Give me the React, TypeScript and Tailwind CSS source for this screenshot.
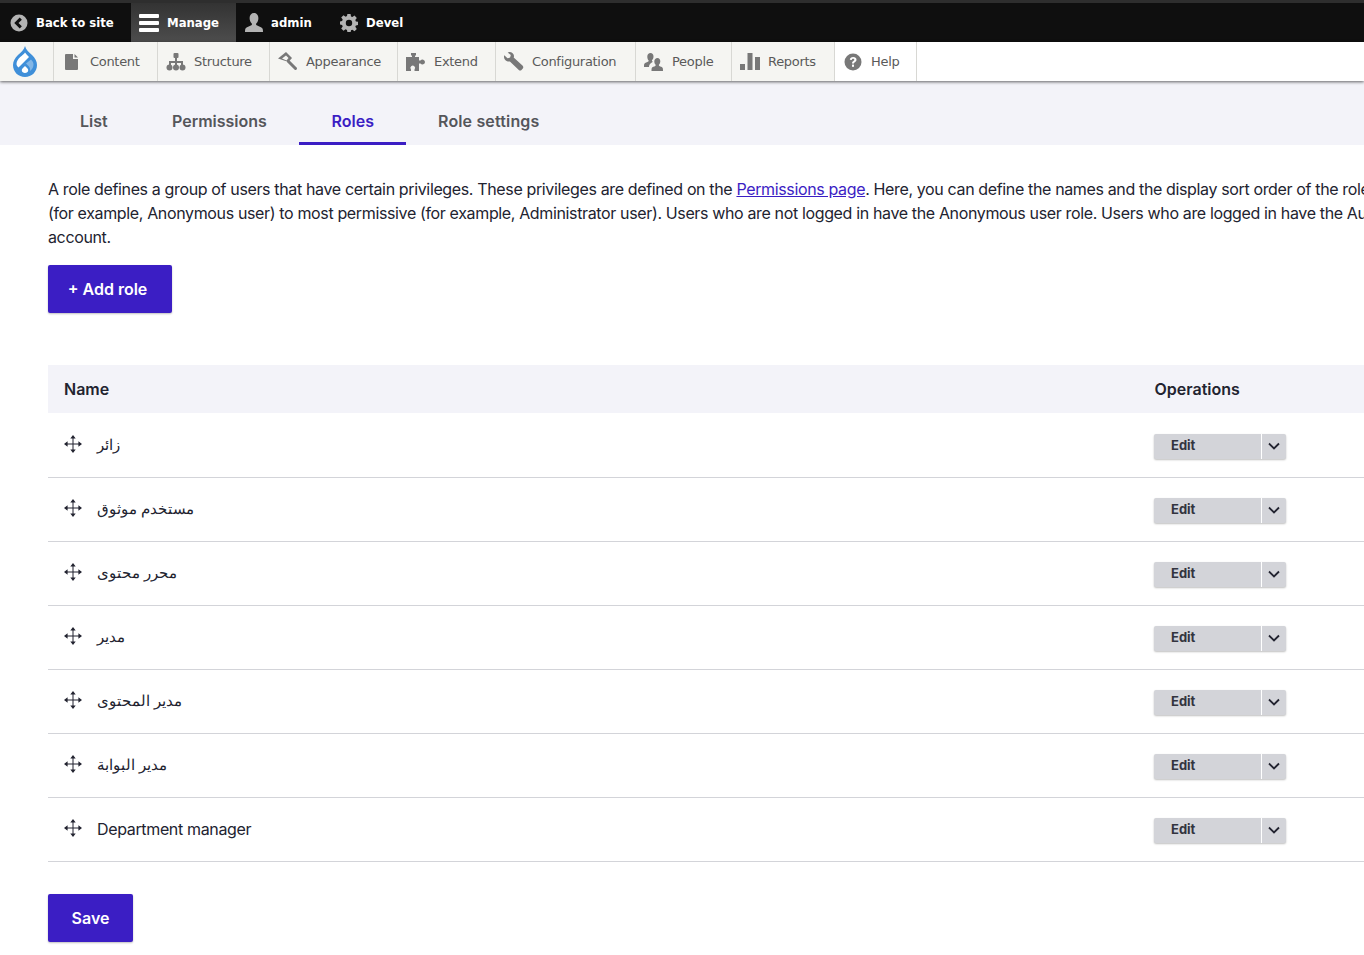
import type { ReactNode } from 'react';

function BackIcon() {
  return (
    <svg width="18" height="18" viewBox="0 0 18 18">
      <circle cx="9" cy="9" r="8.5" fill="#b3b3b3" />
      <path d="M10.8 4.6 6.4 9l4.4 4.4" fill="none" stroke="#0f0f0f" strokeWidth="3" />
    </svg>
  );
}

function ManageIcon() {
  return (
    <svg width="20" height="20" viewBox="0 0 20 20" fill="#fff">
      <rect x="0" y="1" width="20" height="4" rx="1" />
      <rect x="0" y="8" width="20" height="4" rx="1" />
      <rect x="0" y="15" width="20" height="4" rx="1" />
    </svg>
  );
}

function UserIcon() {
  return (
    <svg width="18" height="20" viewBox="0 0 18 20" fill="#b3b3b3">
      <path d="M9 0c2.600 0 4.400 2 4.400 5 0 2.400-1 4.300-2 5.300-.5.600-.4 1.600.3 2 1.800.9 4.800 1.700 5.800 3.200.4.700.5 2 .5 3.500H0c0-1.500.1-2.800.5-3.500 1-1.500 4-2.300 5.800-3.200.7-.4.8-1.400.3-2-1-1-2-2.900-2-5.300C4.600 2 6.400 0 9 0z" />
    </svg>
  );
}

function GearIcon() {
  return (
    <svg width="18" height="18" viewBox="0 0 18 18" fill="#b3b3b3">
      <path fillRule="evenodd" d="M7.400 0h3.200l.4 2.500 1.400.6 2.100-1.500 2.300 2.300-1.500 2.100.6 1.400 2.100.4v3.200l-2.100.4-.6 1.400 1.500 2.100-2.300 2.300-2.100-1.500-1.400.6-.4 2.100H7.400L7 15.900l-1.400-.6-2.100 1.500-2.300-2.300 1.500-2.100-.6-1.400-2.100-.4V7.400l2.100-.4.600-1.400-1.500-2.100 2.300-2.300 2.100 1.500L7 2.100zM9 5.800a3.200 3.200 0 1 0 0 6.400 3.200 3.200 0 0 0 0-6.400z" />
    </svg>
  );
}

function DropLogo() {
  return (
    <svg width="24" height="31" viewBox="0 0 24 31">
      <path d="M12 0c1 4 4 6 7 9 3 3 5 6 5 10 0 7-5.400 12-12 12S0 26 0 19c0-4 2-7 5-10 3-3 6-5 7-9z" fill="#3f8fd9" />
      <path d="M12 6.500c1 1.500 2.500 3 4 4.500L5.500 21.500C4.500 20.500 3.500 19.500 3.500 18c0-3 1.700-5 3.700-7 1.800-1.500 3.800-3 4.800-4.500z" fill="#fff" />
      <path d="M18 13.500c1.500 1.500 2.500 3 2.500 5 0 2.800-1.500 5-3.500 6.500.4-2-.2-3.800-1.500-5l-2.500-2.500z" fill="#fff" opacity="0.35" />
      <path d="M12 20l2.300 2.300c1.300 1.300 1.200 3-.1 4-1.200.9-3.200.9-4.400 0-1.300-1-1.400-2.700-.1-4z" fill="#fff" />
    </svg>
  );
}

function ContentIcon() {
  return (
    <svg width="14" height="16" viewBox="0 0 14 16" fill="#787878">
      <path d="M1 0h7v5h5v10a1 1 0 0 1-1 1H1a1 1 0 0 1-1-1V1a1 1 0 0 1 1-1z" />
      <path d="M9.500 0 13 3.600H9.500z" />
    </svg>
  );
}

function StructureIcon() {
  return (
    <svg width="20" height="18" viewBox="0 0 20 18" fill="#787878">
      <rect x="7.500" y="0" width="5" height="5" rx="1" />
      <rect x="9" y="4" width="2" height="9" />
      <path d="M3 8h14v5h-2v-3H5v3H3z" />
      <circle cx="3.500" cy="14.500" r="3" />
      <circle cx="10" cy="14.500" r="3" />
      <circle cx="16.500" cy="14.500" r="3" />
    </svg>
  );
}

function AppearanceIcon() {
  return (
    <svg width="20" height="19" viewBox="0 0 20 19">
      <path d="M8 0 14 6l-3.500 4L0 6.500z" fill="#787878" />
      <path d="M4 6.500 8 3.500l2.500 2.500L8.500 8.500z" fill="#f5f5f2" />
      <path d="m10.500 9.500 7 7" stroke="#787878" strokeWidth="3" strokeLinecap="round" />
    </svg>
  );
}

function ExtendIcon() {
  return (
    <svg width="20" height="18" viewBox="0 0 20 18" fill="#787878">
      <path d="M5 0h5v2.500H9V4h4v3.500h1.500a2.500 2.500 0 0 1 4.500 1.500 2.500 2.500 0 0 1-4.500 1.500H13V18H8.500v-1.500a2.300 2.300 0 1 0-3.500 0V18H0V4h6V2.500H5z" />
    </svg>
  );
}

function ConfigIcon() {
  return (
    <svg width="20" height="19" viewBox="0 0 20 19" fill="#787878">
      <path d="M5.500 0c2.400 0 4.500 1.700 4.500 4 0 .7-.1 1.100-.3 1.600l9 8.200c.7.700.8 1.800.1 2.600l-1.300 1.500c-.7.800-1.900.9-2.700.1L5.900 9.500C3 10 0 8.200 0 4.800c0-.6.100-1 .3-1.500l3.200 3 2.600-.7.700-2.500L3.700.5C4.300.2 4.900 0 5.500 0z" />
    </svg>
  );
}

function PeopleIcon() {
  return (
    <svg width="20" height="18" viewBox="0 0 20 18" fill="#787878">
      <path d="M6.500 0C8.300 0 9.500 1.400 9.500 3.400c0 1.600-.7 3-1.400 3.700-.3.400-.2 1 .2 1.300l.7.400c-.6.500-1.700 1.100-2.500 1.700-1 .8-1.500 2-1.500 3.500H0c0-1.500 0-2.700.4-3.200.7-1 2.800-1.600 3.900-2.200.4-.3.500-.9.200-1.300-.7-.8-1.200-2.200-1.200-3.900C3.300 1.400 4.700 0 6.500 0z" />
      <path d="M13.500 5c1.700 0 2.800 1.300 2.800 3.200 0 1.500-.6 2.700-1.200 3.400-.3.400-.3 1 .2 1.300 1.100.6 2.900 1 3.400 2 .2.500.3 1.600.3 3.100H7.500c0-1.500.1-2.600.3-3.100.5-1 2.400-1.400 3.500-2 .4-.3.500-.9.200-1.300-.7-.7-1.200-1.900-1.200-3.400C10.300 6.300 11.800 5 13.500 5z" />
    </svg>
  );
}

function ReportsIcon() {
  return (
    <svg width="20" height="18" viewBox="0 0 20 18" fill="#787878">
      <rect x="0" y="11" width="5" height="6" />
      <rect x="7.500" y="0" width="5" height="17" />
      <rect x="15" y="4" width="5" height="13" />
    </svg>
  );
}

function HelpIcon() {
  return (
    <svg width="18" height="18" viewBox="0 0 18 18">
      <circle cx="9" cy="9" r="8.500" fill="#787878" />
      <path d="M5.800 6.800C6 5 7.300 4 9.200 4c1.900 0 3.300 1.100 3.300 2.700 0 2.300-2.500 2.200-2.500 3.900H8c0-2.600 2.300-2.700 2.300-3.900 0-.6-.5-1-1.200-1-.8 0-1.200.5-1.300 1.300z" fill="#fff" />
      <rect x="8" y="11.600" width="2" height="2.200" fill="#fff" />
    </svg>
  );
}

function DragIcon() {
  return (
    <svg width="18" height="18" viewBox="0 0 18 18" fill="#222330" stroke="none">
      <path d="M8.500 2h1v14h-1zM2 8.500h14v1H2z" />
      <path d="M9 0l2.700 3.600H6.300zM9 18l2.700-3.600H6.300zM0 9l3.600-2.700v5.400zM18 9l-3.600-2.700v5.400z" />
    </svg>
  );
}

function TopItem({ icon, label, className }: { icon: ReactNode; label: string; className: string }) {
  return (
    <div className={`flex items-center h-full text-[13px] font-bold text-white ${className}`}>
      {icon}
      <span>{label}</span>
    </div>
  );
}

function TrayItem({ icon, label, width, active }: { icon: ReactNode; label: string; width: string; active?: boolean }) {
  return (
    <div className={`flex items-center h-full gap-2 pl-[8px] border-r border-[#d8d8d4] text-[13px] tracking-[-0.3px] text-[#5a5a5a] ${width} ${active ? 'bg-white' : 'bg-[#f5f5f2]'}`}>
      <span className="flex w-5 justify-center shrink-0">{icon}</span>
      <span>{label}</span>
    </div>
  );
}

const ROLES = ['زائر', 'مستخدم موثوق', 'محرر محتوى', 'مدير', 'مدير المحتوى', 'مدير البوابة', 'Department manager'];

function RoleRow({ name }: { name: string }) {
  const isArabic = /[\u0600-\u06FF]/.test(name);
  return (
    <div className="flex items-center h-16 border-b border-[#d3d4d9] pl-[15.500px]">
      <span className="w-[33.500px] shrink-0 -mt-[3px]">
        <DragIcon />
      </span>
      <span className={`w-[1057px] shrink-0 tracking-[-0.35px] text-[#222330] ${isArabic ? '-mt-[1px] text-[15px]' : '-mt-[2px] text-[16px]'}`}>{name}</span>
      <div className="flex h-[25px] w-[132px] mt-px rounded-[2px] bg-[#d3d4d9] shadow-[0_1px_2px_rgba(0,0,0,0.25)] text-[13px] font-bold text-[#33343f]">
        <span className="w-[108px] pl-[17px] leading-[23px] border-r border-white">Edit</span>
        <span className="flex-1 flex items-center justify-center">
          <svg width="12" height="8" viewBox="0 0 12 8" fill="none" stroke="#222330" strokeWidth="1.800">
            <path d="M1 1.500 6 6.500l5-5" />
          </svg>
        </span>
      </div>
    </div>
  );
}

export default function App() {
  return (
    <div className="h-[955px] w-[1364px] overflow-hidden bg-white font-['Inter',sans-serif] text-[#222330]">
      {/* Toolbar */}
      <div className="flex h-[42px] items-center bg-[#0f0f0f] border-t-[3px] border-[#2e2e2e] font-['DejaVu_Sans_Condensed','DejaVu_Sans',sans-serif]">
        <TopItem icon={<BackIcon />} label="Back to site" className="w-[131px] pl-[10px] gap-[8px]" />
        <TopItem icon={<ManageIcon />} label="Manage" className="w-[105px] pl-[8px] gap-[8px] bg-gradient-to-b from-[#333333] to-[#4d4d4d]" />
        <TopItem icon={<UserIcon />} label="admin" className="w-[95px] pl-[9px] gap-[8px]" />
        <TopItem icon={<GearIcon />} label="Devel" className="pl-[9px] gap-[8px]" />
      </div>
      {/* Tray */}
      <div className="relative z-10 flex h-[39px] bg-white shadow-[0_1px_3px_rgba(0,0,0,0.6)] font-['DejaVu_Sans',sans-serif]">
        <div className="flex items-center justify-center w-[54px] h-full bg-[#f5f5f2] border-r border-[#d8d8d4] pr-[3px]">
          <DropLogo />
        </div>
        <TrayItem icon={<ContentIcon />} label="Content" width="w-[104px]" />
        <TrayItem icon={<StructureIcon />} label="Structure" width="w-[112px]" />
        <TrayItem icon={<AppearanceIcon />} label="Appearance" width="w-[128px]" />
        <TrayItem icon={<ExtendIcon />} label="Extend" width="w-[98px]" />
        <TrayItem icon={<ConfigIcon />} label="Configuration" width="w-[140px]" />
        <TrayItem icon={<PeopleIcon />} label="People" width="w-[96px]" />
        <TrayItem icon={<ReportsIcon />} label="Reports" width="w-[103px]" />
        <TrayItem icon={<HelpIcon />} label="Help" width="w-[82px]" active />
      </div>
      {/* Tabs */}
      <div className="flex h-[64px] items-end bg-[#f3f3f9] pl-[48px] text-[16px] font-semibold text-[#55565b]">
        <div className="flex h-12 w-[92px] items-center pl-8">List</div>
        <div className="flex h-12 w-[159px] items-center pl-8">Permissions</div>
        <div className="flex h-12 w-[107px] items-center pl-[32.500px] text-[#3b1ec4] border-b-[3px] border-[#3b1ec4] pt-[3px]">Roles</div>
        <div className="flex h-12 items-center px-8 tracking-[0.15px]">Role settings</div>
      </div>
      {/* Body */}
      <div className="pl-12 pt-8">
        <p className="whitespace-nowrap text-[16px] leading-6 tracking-[-0.36px]">
          A role defines a group of users that have certain privileges. These privileges are defined on the{' '}
          <a className="text-[#3b1ec4] underline">Permissions page</a>. Here, you can define the names and the display sort order of the roles on your site.
          <br />
          (for example, Anonymous user) to most permissive (for example, Administrator user). Users who are not logged in have the Anonymous user role. Users who are logged in have the Authenticated user role.
          <br />
          account.
        </p>
        <button className="mt-4 flex h-12 w-[124px] items-center justify-center rounded-[2px] bg-[#3b1ec4] pr-[5px] text-[16px] font-semibold text-white shadow-[0_1px_2px_rgba(0,0,0,0.25)]">
          + Add role
        </button>
        <div className="mt-[52px]">
          <div className="flex h-12 items-center bg-[#f3f3f9] pl-4 font-semibold text-[16px]">
            <span className="w-[1090.500px] shrink-0">Name</span>
            <span>Operations</span>
          </div>
          <div className="pt-px">
            {ROLES.map((r) => (
              <RoleRow key={r} name={r} />
            ))}
          </div>
        </div>
        <button className="mt-8 flex h-12 w-[85px] items-center justify-center rounded-[2px] bg-[#3b1ec4] text-[16px] font-semibold text-white shadow-[0_1px_2px_rgba(0,0,0,0.25)]">
          Save
        </button>
      </div>
    </div>
  );
}
